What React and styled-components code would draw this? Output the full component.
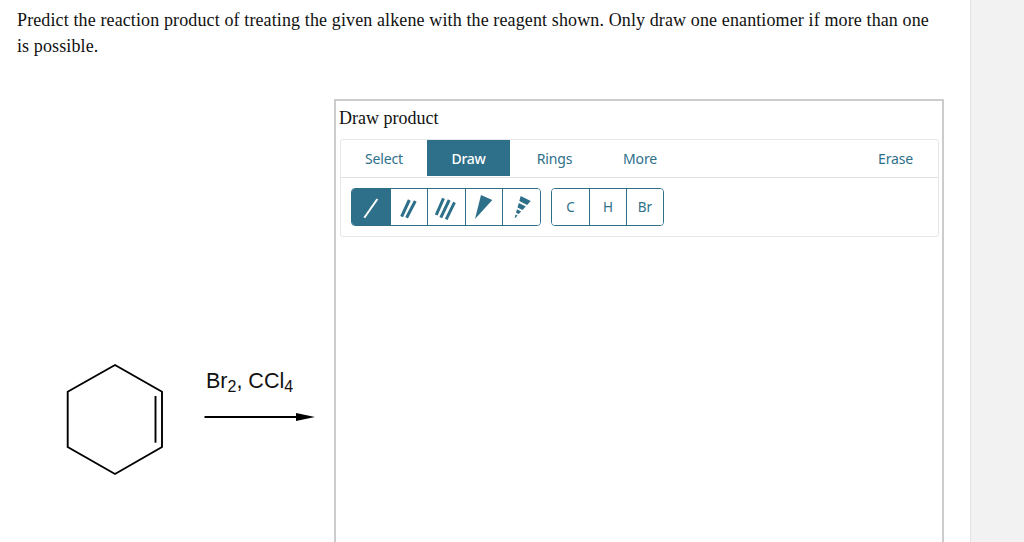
import React from 'react'
import styled, { createGlobalStyle } from 'styled-components'

const teal = '#2e7089'

const GlobalStyle = createGlobalStyle`
  html, body {
    margin: 0;
    padding: 0;
    background: #fff;
    overflow: hidden;
  }
`

const Page = styled.div`
  display: flex;
  width: 1024px;
  height: 542px;
  overflow: hidden;
`

const Main = styled.main`
  width: 970px;
  flex: none;
  box-sizing: border-box;
  padding: 7px 26px 0 17px;
`

const Sidebar = styled.aside`
  flex: 1;
  background: #f2f2f2;
  border-left: 1px solid #e3e3e3;
`

const Question = styled.p`
  margin: 0;
  width: 920px;
  font: 18px/26px "Liberation Serif", serif;
  letter-spacing: 0.12px;
  color: #111;
`

const Body = styled.div`
  display: flex;
  margin-top: 40px;
`

const Figure = styled.div`
  width: 317px;
  flex: none;
  box-sizing: border-box;
  padding: 261px 0 0 48px;
`

const ReactionDrawing = styled.svg`
  display: block;
`

const Panel = styled.section`
  width: 610px;
  height: 460px;
  flex: none;
  box-sizing: border-box;
  border: 2px solid #ccc;
  padding: 0 3px 0 4px;
`

const PanelTitle = styled.h2`
  margin: 0;
  padding-top: 5px;
  height: 33px;
  margin-left: -1px;
  font: 400 18px/24px "Liberation Serif", serif;
  color: #111;
`

const Editor = styled.div`
  border: 1px solid #e6e6e6;
  border-radius: 3px;
`

const Tabs = styled.div`
  display: flex;
  height: 37px;
  border-bottom: 1px solid #e0e0e0;
`

const Tab = styled.button`
  width: ${p => p.$width}px;
  height: 36px;
  padding: 0;
  border: 0;
  background: ${p => (p.$active ? teal : 'transparent')};
  color: ${p => (p.$active ? '#fff' : teal)};
  font: ${p => (p.$active ? 500 : 400)} 14px "Noto Sans", sans-serif;
  letter-spacing: ${p => (p.$active ? '-0.35px' : '-0.15px')};
  margin-left: ${p => (p.$push ? 'auto' : 0)};
`

const ToolRow = styled.div`
  display: flex;
  gap: 10px;
  padding: 10px 11px 10px 10px;
  height: 38px;
`

const Group = styled.div`
  display: flex;
  height: 38px;
  box-sizing: border-box;
  border: 1px solid ${teal};
  border-radius: 4px;
  overflow: hidden;
`

const ToolButton = styled.button`
  width: ${p => p.$width}px;
  padding: 0;
  border: 0;
  border-left: ${p => (p.$first ? 0 : `1px solid ${teal}`)};
  background: ${p => (p.$active ? teal : '#fff')};
  color: ${p => (p.$active ? '#fff' : teal)};
  display: flex;
  align-items: center;
  justify-content: center;
  font: 13.5px "Noto Sans", sans-serif;
`

const SingleBond = () => (
  <svg width="20" height="26" viewBox="0 0 20 26">
    <path d="M16.4 5 3.3 23.7" stroke="currentColor" strokeWidth="2" />
  </svg>
)

const DoubleBond = () => (
  <svg width="20" height="26" viewBox="0 0 20 26">
    <path d="M10.3 6 2.6 22.7M16.3 7 7.6 23.7" stroke="currentColor" strokeWidth="3" />
  </svg>
)

const TripleBond = () => (
  <svg width="22" height="26" viewBox="0 0 22 26">
    <path d="M8.5 4.3 1.2 21M14.2 6 5.8 23.7M19.5 8.3 11.2 25.3" stroke="currentColor" strokeWidth="3" />
  </svg>
)

const WedgeBond = () => (
  <svg width="22" height="26" viewBox="0 0 22 26">
    <path d="M8 1 19.3 6 2 25Z" fill="currentColor" />
  </svg>
)

const HashBond = () => (
  <svg width="22" height="26" viewBox="0 0 22 26">
    <path
      d="M9.7 2 19.7 7 16.1 11 8.3 7.1ZM7.8 8.9 14.8 12.4 11.5 16 6.5 13.5ZM6 15.3 10.2 17.4 7.7 20.1 5 18.8ZM4.6 20.4 6.6 21.4 4.1 24.1 3.6 23.9Z"
      fill="currentColor"
    />
  </svg>
)

const bonds = [SingleBond, DoubleBond, TripleBond, WedgeBond, HashBond]
const atoms = ['C', 'H', 'Br']
const tabs = [
  { name: 'Select', width: 86 },
  { name: 'Draw', width: 83 },
  { name: 'Rings', width: 89 },
  { name: 'More', width: 82 },
]

const Reaction = () => (
  <ReactionDrawing width="262" height="120" viewBox="0 0 262 120">
    <g fill="none" stroke="#000" strokeWidth="1.9">
      <path d="M50 5 97 31.7V87L50 114 2.7 87V31.7Z" />
      <path d="M90.5 36V82.7" />
      <path d="M139.5 57H232" />
    </g>
    <path d="M231 53 250 57 231 61Z" fill="#000" />
    <text x="141" y="28" fontFamily="'Liberation Sans', sans-serif" fontSize="21.5" fill="#111">
      Br<tspan fontSize="16" dy="4">2</tspan>
      <tspan dy="-4">, CCl</tspan>
      <tspan fontSize="16" dy="4">4</tspan>
    </text>
  </ReactionDrawing>
)

const App = () => (
  <>
    <GlobalStyle />
    <Page>
      <Main>
        <Question>
          Predict the reaction product of treating the given alkene with the reagent shown. Only draw one
          enantiomer if more than one is possible.
        </Question>
        <Body>
          <Figure>
            <Reaction />
          </Figure>
          <Panel>
            <PanelTitle>Draw product</PanelTitle>
            <Editor>
              <Tabs>
                {tabs.map(t => (
                  <Tab key={t.name} $width={t.width} $active={t.name === 'Draw'}>{t.name}</Tab>
                ))}
                <Tab $width={85} $push>Erase</Tab>
              </Tabs>
              <ToolRow>
                <Group>
                  {bonds.map((Icon, i) => (
                    <ToolButton key={i} $width={37.6} $first={i === 0} $active={i === 0}>
                      <Icon />
                    </ToolButton>
                  ))}
                </Group>
                <Group>
                  {atoms.map((a, i) => (
                    <ToolButton key={a} $width={37} $first={i === 0}>{a}</ToolButton>
                  ))}
                </Group>
              </ToolRow>
            </Editor>
          </Panel>
        </Body>
      </Main>
      <Sidebar />
    </Page>
  </>
)

export default App
